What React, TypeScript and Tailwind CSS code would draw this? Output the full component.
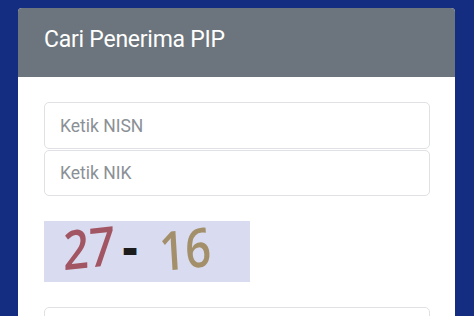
export default function App() {
  return (
    <div className="h-[316px] w-[474px] overflow-hidden bg-[#142d80] px-[18px] pt-[8px] font-['Roboto',sans-serif]">
      <div className="w-[437px] overflow-hidden rounded-[4px] bg-white">
        <div className="h-[69px] bg-[#6c757d] pl-[26px] pt-[18px]">
          <h1 className="text-[23px] leading-[28px] tracking-[-0.25px] text-white">Cari Penerima PIP</h1>
        </div>

        <div className="flex flex-col px-[26px] pt-[25px]">
          <input
            placeholder="Ketik NISN"
            className="h-[47px] w-[386px] rounded-[5px] border border-[#dfe1e4] px-[15px] text-[17.5px] text-[#495057] placeholder:text-[#8b9096] outline-none"
          />
          <input
            placeholder="Ketik NIK"
            className="mt-[1px] h-[46px] w-[386px] rounded-[5px] border border-[#dfe1e4] px-[15px] text-[17.5px] text-[#495057] placeholder:text-[#8b9096] outline-none"
          />

          {/* captcha */}
          <div className="mt-[25px] flex h-[61px] w-[206px] items-start bg-[#d9dcf0] pl-[15px] font-['Open_Sans',sans-serif] leading-none">
            <span className="-mt-[1px] inline-block w-[50px] -skew-x-6 -rotate-6 scale-x-[0.84] text-center text-[54px] font-semibold text-[#a25563]">27</span>
            <span className="ml-[13px] mt-[2px] inline-block w-[16px] text-center text-[46px] font-extrabold text-[#1c1c1c]">-</span>
            <span className="ml-[17px] mt-0 inline-block w-[50px] -skew-x-3 -rotate-6 scale-x-[0.84] text-center text-[54px] font-semibold text-[#a3906b]">16</span>
          </div>

          <input
            placeholder=""
            className="mt-[25px] h-[46px] w-[386px] rounded-[5px] border border-[#dfe1e4] px-[15px] text-[18px] outline-none"
          />
        </div>
      </div>
    </div>
  );
}
